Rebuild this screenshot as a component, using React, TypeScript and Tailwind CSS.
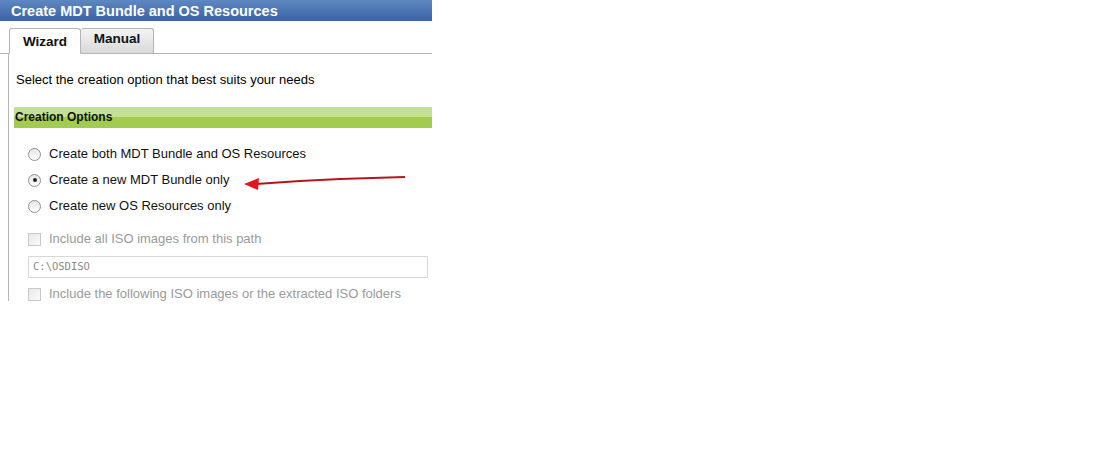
const Radio = ({ checked }: { checked?: boolean }) => (
	<span className="w-[13px] h-[13px] rounded-full border border-[#8f8f8f] bg-gradient-to-b from-[#e6e6e6] to-white flex items-center justify-center shrink-0">
		{checked && <span className="w-[4px] h-[4px] rounded-full bg-[#222]" />}
	</span>
);

const Check = () => (
	<span className="w-[13px] h-[13px] border border-[#c8c8c8] bg-gradient-to-br from-[#e8e8e8] to-[#fafafa] shrink-0" />
);

const App = () => {
	return (
		<div className="relative w-[1104px] h-[460px] bg-white font-['Liberation_Sans',Arial,sans-serif] overflow-hidden">
			<div className="w-[432px]">
				{/* Title */}
				<div className="h-[21px] bg-gradient-to-b from-[#5f87c1] to-[#3963a6] flex items-center pl-[11px]">
					<p className="text-white font-bold text-[14.5px] leading-[16px]">Create MDT Bundle and OS Resources</p>
				</div>
				{/* Tabs */}
				<div className="flex items-end pl-[9px] pt-[7px] border-b border-[#b4b4b4]">
					<div className="w-[72px] h-[26px] -mb-px bg-white border border-b-white border-[#b4b4b4] rounded-t-[3px] flex items-center justify-center">
						<span className="font-bold text-[13.5px] text-[#111] pt-[3px]">Wizard</span>
					</div>
					<div className="w-[73px] h-[25px] bg-gradient-to-b from-[#f4f4f4] to-[#d9d9d9] border border-b-0 border-l-0 border-[#b4b4b4] rounded-t-[3px] flex items-center justify-center">
						<span className="font-bold text-[13.5px] text-[#111] -mt-[3px]">Manual</span>
					</div>
				</div>
				{/* Panel */}
				<div className="ml-[8px] h-[247px] border-l border-[#b4b4b4] overflow-hidden">
					<p className="pl-[7px] pt-[18px] text-[13px] text-black leading-[16px]">
						Select the creation option that best suits your needs
					</p>
					<div className="ml-[5px] mt-[19px] h-[21px] flex flex-col relative">
						<div className="h-[10px] bg-[#c4e093]" />
						<div className="h-[11px] bg-[#a2cb50]" />
						<span className="absolute left-[1px] top-[3px] font-bold text-[12px] text-[#111] leading-[14px]">
							Creation Options
						</span>
					</div>
					<div className="pl-[19px] pt-[13px] flex flex-col">
						{[
							["Create both MDT Bundle and OS Resources", false],
							["Create a new MDT Bundle only", true],
							["Create new OS Resources only", false],
						].map(([label, checked]) => (
							<div key={label as string} className="h-[26px] flex items-center gap-[8px]">
								<Radio checked={checked as boolean} />
								<span className="text-[13px] text-[#111]">{label}</span>
							</div>
						))}
						<div className="h-[26px] mt-[7px] flex items-center gap-[8px]">
							<Check />
							<span className="text-[13px] text-[#9a9a9a]">Include all ISO images from this path</span>
						</div>
						<div className="w-[400px] h-[22px] mt-[4px] border border-[#d8d8d8] flex items-center pl-[4px]">
							<span className="font-['DejaVu_Sans_Mono',monospace] text-[10.5px] text-[#8a8a8a]">C:\OSDISO</span>
						</div>
						<div className="h-[26px] mt-[3px] flex items-center gap-[8px]">
							<Check />
							<span className="text-[13px] text-[#9a9a9a]">Include the following ISO images or the extracted ISO folders</span>
						</div>
					</div>
				</div>
			</div>
			{/* Arrow */}
			<svg className="absolute left-0 top-0" width="440" height="200">
				<path d="M405 177 L340 179 L300 181 L256 184" stroke="#b3171c" strokeWidth="2" fill="none" />
				<path d="M244 184 L259 178 L258 190 Z" fill="#e3161b" />
			</svg>
		</div>
	);
};

export default App;
